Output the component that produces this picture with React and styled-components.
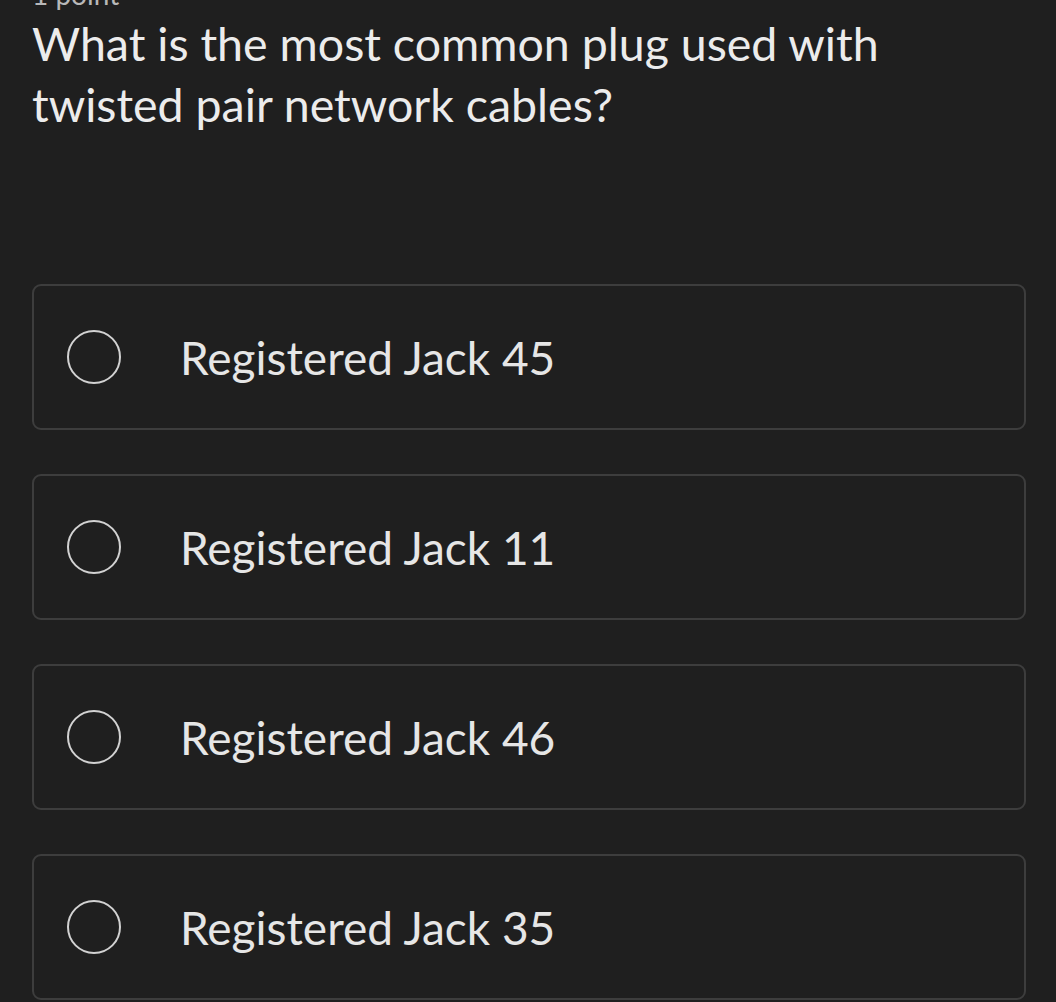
import React from "react";
import styled, { createGlobalStyle } from "styled-components";

const Global = createGlobalStyle`
  html, body {
    margin: 0;
    padding: 0;
    background: #1f1f1f;
  }
  body {
    font-family: Lato, "Noto Sans", sans-serif;
    color: #ececec;
    overflow: hidden;
  }
`;

const Page = styled.div`
  display: flex;
  flex-direction: column;
  padding: 0 30px 0 32px;
  height: 1002px;
  overflow: hidden;
`;

const Points = styled.div`
  margin-top: -23px;
  font-size: 28px;
  line-height: 34px;
  color: #b8b8b8;
`;

const Question = styled.h1`
  margin: 2px 0 0;
  font-size: 46.5px;
  font-weight: 400;
  line-height: 61px;
  color: #ececec;
`;

const Options = styled.div`
  display: flex;
  flex-direction: column;
  gap: 44px;
  margin-top: 149px;
`;

const Option = styled.label`
  display: flex;
  align-items: center;
  height: 146px;
  box-sizing: border-box;
  border: 2px solid #3d3d3d;
  border-radius: 9px;
  padding-left: 33px;
  cursor: pointer;
`;

const Radio = styled.span`
  width: 54px;
  height: 54px;
  box-sizing: border-box;
  border: 2.5px solid #d2d2d2;
  border-radius: 50%;
  flex-shrink: 0;
`;

const OptionText = styled.span`
  margin-left: 59px;
  font-size: 46px;
  color: #e6e6e6;
`;

const options = [
  "Registered Jack 45",
  "Registered Jack 11",
  "Registered Jack 46",
  "Registered Jack 35",
];

export default function App() {
  return (
    <>
      <Global />
      <Page>
        <Points>1 point</Points>
        <Question>
          What is the most common plug used with
          <br />
          twisted pair network cables?
        </Question>
        <Options>
          {options.map((o) => (
            <Option key={o}>
              <Radio />
              <OptionText>{o}</OptionText>
            </Option>
          ))}
        </Options>
      </Page>
    </>
  );
}
